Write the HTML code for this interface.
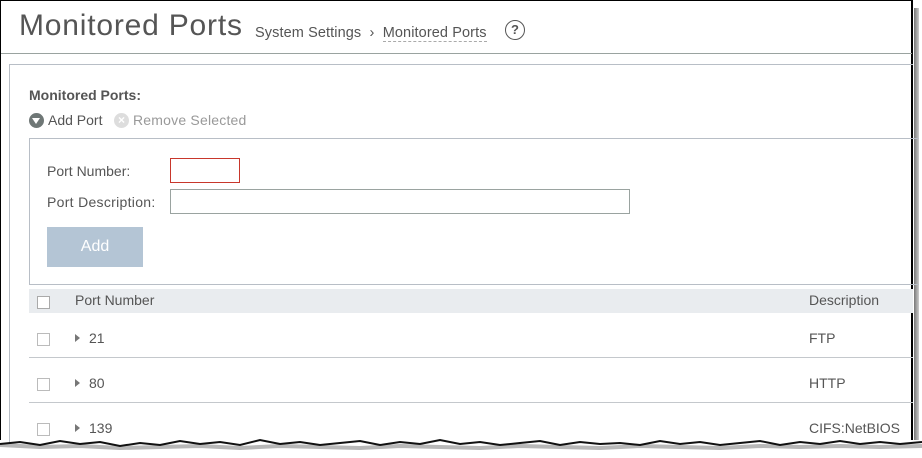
<!DOCTYPE html>
<html><head><style>
*{margin:0;padding:0;box-sizing:border-box}
body{width:922px;height:458px;background:#fff;position:relative;overflow:hidden;font-family:"Liberation Sans",sans-serif;color:#555}
.abs{position:absolute;white-space:nowrap}
</style></head><body>
<div class="abs" style="left:0;top:0;width:913px;height:440px;border-left:1px solid #000;border-top:1px solid #000;border-right:2px solid #000;background:#fff"></div>
<div class="abs" style="left:914px;top:8px;width:5px;height:432px;background:linear-gradient(90deg,#777,#ccc)"></div>
<div class="abs" style="left:19px;top:9px;font-size:30px;color:#555;letter-spacing:0.8px">Monitored Ports</div>
<div class="abs" style="left:255px;top:25px;font-size:14.5px;color:#555;letter-spacing:0.1px">System Settings &nbsp;›&nbsp; <span style="border-bottom:1px dashed #aaa">Monitored Ports</span></div>
<div class="abs" style="left:505px;top:20px;width:20px;height:20px;border:1.5px solid #555;border-radius:50%;font-size:13px;font-weight:bold;text-align:center;line-height:17px">?</div>
<div class="abs" style="left:1px;top:53px;width:911px;height:1px;background:#9aa3a0"></div>
<div class="abs" style="left:9px;top:64px;width:904px;height:380px;border-left:1px solid #b8bec6;border-top:1px solid #b8bec6"></div>
<div class="abs" style="left:29px;top:87px;font-size:14px;font-weight:bold;color:#555">Monitored Ports:</div>
<div class="abs" style="left:29px;top:113px;width:15px;height:15px;border-radius:50%;background:#6f7776"></div>
<div class="abs" style="left:32px;top:118px;width:0;height:0;border-left:4.5px solid transparent;border-right:4.5px solid transparent;border-top:6px solid #fff"></div>
<div class="abs" style="left:48px;top:112px;font-size:14px;color:#555">Add Port</div>
<div class="abs" style="left:114px;top:113px;width:15px;height:15px;border-radius:50%;background:#ddd;color:#fff;font-size:12px;font-weight:bold;text-align:center;line-height:15px">×</div>
<div class="abs" style="left:133px;top:112px;font-size:14px;color:#999;letter-spacing:0.2px">Remove Selected</div>
<div class="abs" style="left:29px;top:138px;width:890px;height:147px;border:1px solid #b8bec6;border-right:none"></div>
<div class="abs" style="left:47px;top:163px;font-size:14px">Port Number:</div>
<div class="abs" style="left:170px;top:158px;width:70px;height:25px;border:1px solid #c8372c"></div>
<div class="abs" style="left:47px;top:194px;font-size:14px;letter-spacing:0.3px">Port Description:</div>
<div class="abs" style="left:170px;top:189px;width:460px;height:25px;border:1px solid #9aa3a0"></div>
<div class="abs" style="left:47px;top:227px;width:96px;height:40px;background:#b4c5d5;color:#fff;font-size:16px;text-align:center;line-height:40px">Add</div>
<div class="abs" style="left:29px;top:289px;width:884px;height:24px;background:#e9ecef"></div>
<div class="abs" style="left:37px;top:296px;width:13px;height:13px;border:1px solid #aaa;background:#fff"></div>
<div class="abs" style="left:75px;top:292px;font-size:14px">Port Number</div>
<div class="abs" style="left:809px;top:292px;font-size:14px">Description</div>
<div class="abs" style="left:29px;top:357px;width:884px;height:1px;background:#c4c8cc"></div>
<div class="abs" style="left:29px;top:402px;width:884px;height:1px;background:#c4c8cc"></div>
<div class="abs" style="left:37px;top:333px;width:13px;height:13px;border:1px solid #bbb"></div>
<div class="abs" style="left:37px;top:378px;width:13px;height:13px;border:1px solid #bbb"></div>
<div class="abs" style="left:37px;top:423px;width:13px;height:13px;border:1px solid #bbb"></div>
<div class="abs" style="left:75px;top:334px;border-left:5px solid #777;border-top:4px solid transparent;border-bottom:4px solid transparent"></div>
<div class="abs" style="left:75px;top:379px;border-left:5px solid #777;border-top:4px solid transparent;border-bottom:4px solid transparent"></div>
<div class="abs" style="left:75px;top:424px;border-left:5px solid #777;border-top:4px solid transparent;border-bottom:4px solid transparent"></div>
<div class="abs" style="left:89px;top:330px;font-size:14px">21</div>
<div class="abs" style="left:89px;top:375px;font-size:14px">80</div>
<div class="abs" style="left:89px;top:420px;font-size:14px">139</div>
<div class="abs" style="left:809px;top:330px;font-size:14px">FTP</div>
<div class="abs" style="left:809px;top:375px;font-size:14px">HTTP</div>
<div class="abs" style="left:809px;top:420px;font-size:14px">CIFS:NetBIOS</div>
<svg class="abs" style="left:0;top:436px" width="922" height="22"><path d="M0 8 L20 6 L40 9 L60 5 L80 8 L100 6 L120 10 L140 7 L160 9 L180 5 L200 8 L220 6 L240 9 L260 4 L280 8 L300 6 L320 9 L340 7 L360 5 L380 9 L400 6 L420 8 L440 4 L460 8 L480 6 L500 9 L520 7 L540 5 L560 9 L580 6 L600 8 L620 7 L640 9 L660 5 L680 8 L700 6 L720 9 L740 7 L760 5 L780 9 L800 6 L820 8 L840 5 L860 8 L880 6 L900 8 L922 6 L922 22 L0 22 Z" fill="#fff"/><path d="M0 9 L40 11 L80 10 L120 12 L160 11 L200 10 L240 12 L280 10 L320 11 L360 12 L400 10 L440 11 L480 12 L520 10 L560 11 L600 12 L640 10 L680 11 L720 12 L760 10 L800 11 L840 10 L880 11 L922 10" fill="none" stroke="#888" stroke-width="4" opacity="0.6"/><path d="M0 8 L20 6 L40 9 L60 5 L80 8 L100 6 L120 10 L140 7 L160 9 L180 5 L200 8 L220 6 L240 9 L260 4 L280 8 L300 6 L320 9 L340 7 L360 5 L380 9 L400 6 L420 8 L440 4 L460 8 L480 6 L500 9 L520 7 L540 5 L560 9 L580 6 L600 8 L620 7 L640 9 L660 5 L680 8 L700 6 L720 9 L740 7 L760 5 L780 9 L800 6 L820 8 L840 5 L860 8 L880 6 L900 8 L922 6" fill="none" stroke="#111" stroke-width="2"/></svg>
</body></html>
